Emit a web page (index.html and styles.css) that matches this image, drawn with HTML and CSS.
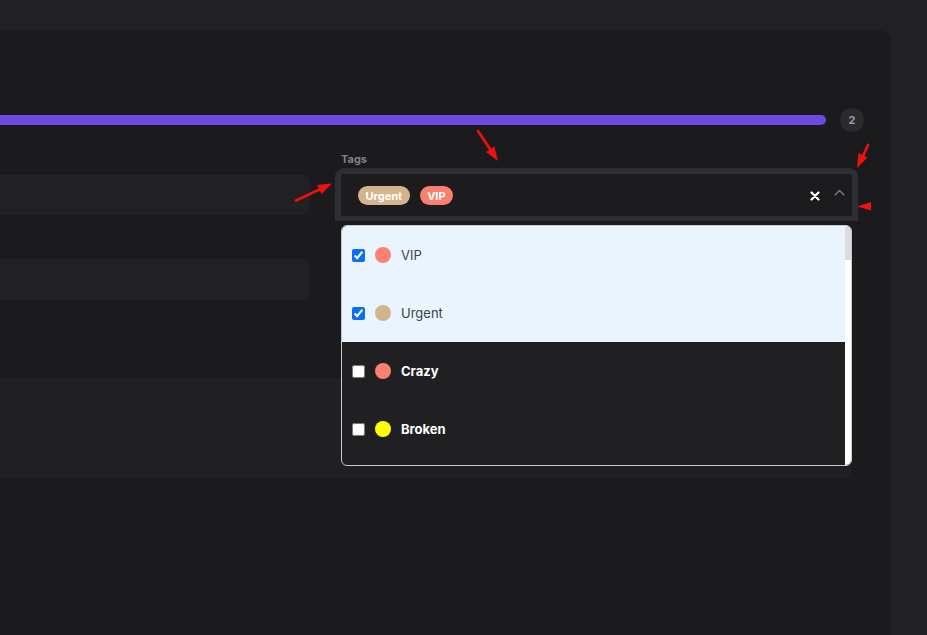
FILE: index.html
```html
<!DOCTYPE html>
<html lang="en">
<head>
<meta charset="utf-8">
<title>Tags select</title>
<link rel="stylesheet" href="styles.css">
</head>
<body>
<div class="page">
  <div class="topband"></div>
  <div class="shell">
    <main class="card">
      <div class="progress-row">
        <div class="progress"><div class="progress-fill"></div></div>
        <div class="step-badge">2</div>
      </div>
      <div class="form">
        <div class="col-left">
          <div class="input"></div>
          <div class="input input-second"></div>
        </div>
        <div class="col-right">
          <div class="label">Tags</div>
          <div class="select-wrap">
            <div class="select-ring">
              <div class="select-field">
                <div class="chips">
                  <span class="chip chip-tan">Urgent</span>
                  <span class="chip chip-salmon">VIP</span>
                </div>
                <div class="controls">
                  <svg class="icon-clear" width="10" height="10" viewBox="0 0 10 10"><path d="M1.5 1.5 L8.5 8.5 M8.5 1.5 L1.5 8.5" stroke="#ffffff" stroke-width="2.2" stroke-linecap="round"/></svg>
                  <svg class="icon-chevron" width="11" height="7" viewBox="0 0 11 7"><path d="M1.2 5.8 L5.5 1.5 L9.8 5.8" fill="none" stroke="#6c7487" stroke-width="1.6" stroke-linecap="round" stroke-linejoin="round"/></svg>
                </div>
              </div>
            </div>
            <div class="menu">
              <div class="menu-list">
                <label class="option selected"><input type="checkbox" checked><span class="dot dot-salmon"></span><span class="opt-text">VIP</span></label>
                <label class="option selected"><input type="checkbox" checked><span class="dot dot-tan"></span><span class="opt-text">Urgent</span></label>
                <label class="option"><input type="checkbox"><span class="dot dot-salmon"></span><span class="opt-text">Crazy</span></label>
                <label class="option"><input type="checkbox"><span class="dot dot-yellow"></span><span class="opt-text">Broken</span></label>
              </div>
              <div class="scrollbar"><div class="thumb"></div></div>
            </div>
          </div>
        </div>
      </div>
      <div class="panel"></div>
    </main>
    <div class="side"></div>
  </div>
  <svg class="annotations" width="927" height="635" viewBox="0 0 927 635">
    <g stroke="#f01010" stroke-width="2.7" stroke-linecap="round" fill="none">
      <line x1="296" y1="200.5" x2="321" y2="188.8"/>
      <line x1="478" y1="131" x2="491" y2="150.5"/>
      <line x1="868" y1="145" x2="863" y2="156"/>
    </g>
    <g fill="#f01010">
      <polygon points="332,183.5 321.5,194 317.2,185"/>
      <polygon points="498,161 486.1,152.1 494.4,146.6"/>
      <polygon points="857,168 858.5,153.2 867.5,157.5"/>
      <polygon points="857,206.5 871,202 871,210.5"/>
    </g>
  </svg>
</div>
</body>
</html>
```

FILE: styles.css
```css
* { box-sizing: border-box; }

html, body {
  margin: 0;
  padding: 0;
  width: 927px;
  height: 635px;
  overflow: hidden;
  background: #212123;
  font-family: Inter, "Noto Sans", "Liberation Sans", sans-serif;
}

.page {
  position: relative;
  width: 927px;
  height: 635px;
  display: flex;
  flex-direction: column;
}

.topband {
  height: 30px;
  background: #212123;
  flex: none;
}

.shell {
  flex: 1;
  display: flex;
}

.card {
  width: 891px;
  background: #1b1b1d;
  border-top-right-radius: 12px;
  padding-top: 78px;
}

.side {
  flex: 1;
  background: #222224;
}

.progress-row {
  display: flex;
  align-items: center;
  width: 864px;
  height: 24px;
}

.progress {
  width: 826px;
  height: 10px;
}

.progress-fill {
  width: 100%;
  height: 100%;
  background: #6d4be1;
  border-radius: 0 5px 5px 0;
}

.step-badge {
  margin-left: 14px;
  width: 24px;
  height: 24px;
  border-radius: 50%;
  background: #2a2a2f;
  color: #9a9fab;
  font-size: 11px;
  font-weight: 700;
  display: flex;
  align-items: center;
  justify-content: center;
}

.form {
  display: flex;
  gap: 25px;
  margin-top: 20px;
  align-items: flex-start;
}

.col-left {
  width: 310px;
  padding-top: 23px;
}

.input {
  height: 40px;
  background: #212123;
  border-radius: 0 8px 8px 0;
}

.input-second {
  margin-top: 44px;
  height: 41px;
}

.col-right {
  width: 523px;
}

.label {
  padding-left: 6px;
  font-size: 11px;
  line-height: 14px;
  font-weight: 700;
  color: #7c818e;
  margin-bottom: 2px;
}

.select-wrap {
  position: relative;
}

.select-ring {
  border: 6px solid #2e2f35;
  border-bottom-width: 5px;
  border-radius: 9px 9px 0 0;
  background: #2e2f35;
}

.select-field {
  height: 42px;
  background: #1c1c1e;
  border-radius: 3px 3px 0 0;
  display: flex;
  align-items: center;
  justify-content: space-between;
  padding: 0 7px 0 17px;
}

.chips {
  display: flex;
  gap: 10px;
  padding-top: 1px;
}

.chip {
  height: 19px;
  border-radius: 10px;
  padding: 0 7.5px;
  display: inline-flex;
  align-items: center;
  color: #ffffff;
  font-size: 11px;
  font-weight: 700;
}

.chip-tan { background: #d3b48c; }
.chip-salmon { background: #f9806f; }

.controls {
  display: flex;
  align-items: center;
  gap: 14px;
}

.icon-clear { display: block; margin-top: 1px; }
.icon-chevron { display: block; margin-top: -6px; }

.menu {
  position: absolute;
  top: 57px;
  left: 6px;
  width: 511px;
  height: 241px;
  border: 1px solid #c9c9cb;
  border-radius: 6px;
  background: #202022;
  overflow: hidden;
  display: flex;
}

.menu-list {
  flex: 1;
}

.option {
  height: 58px;
  display: flex;
  align-items: center;
  padding-left: 10px;
  background: #202022;
  color: #ffffff;
  font-size: 13px;
  font-weight: 700;
}

.option.selected {
  background: #e9f4ff;
  color: #3d414b;
  font-weight: 400;
}

.option input {
  margin: 0;
  width: 13px;
  height: 13px;
  accent-color: #0b6cf6;
}

.dot {
  width: 16px;
  height: 16px;
  border-radius: 50%;
  margin-left: 10px;
  margin-right: 10px;
}

.dot-salmon { background: #fa8072; }
.dot-tan { background: #d2b48c; }
.dot-yellow { background: #ffff00; }

.scrollbar {
  width: 6px;
  background: #ffffff;
  padding-top: 1px;
}

.thumb {
  height: 33px;
  background: #dcdcdf;
  border-radius: 0 3px 0 0;
}

.panel {
  margin-top: 77px;
  width: 851px;
  height: 101px;
  background: #202022;
  border-top: 1px solid #18181a;
  border-radius: 0 0 7px 0;
}

.annotations {
  position: absolute;
  top: 0;
  left: 0;
  pointer-events: none;
}
```
